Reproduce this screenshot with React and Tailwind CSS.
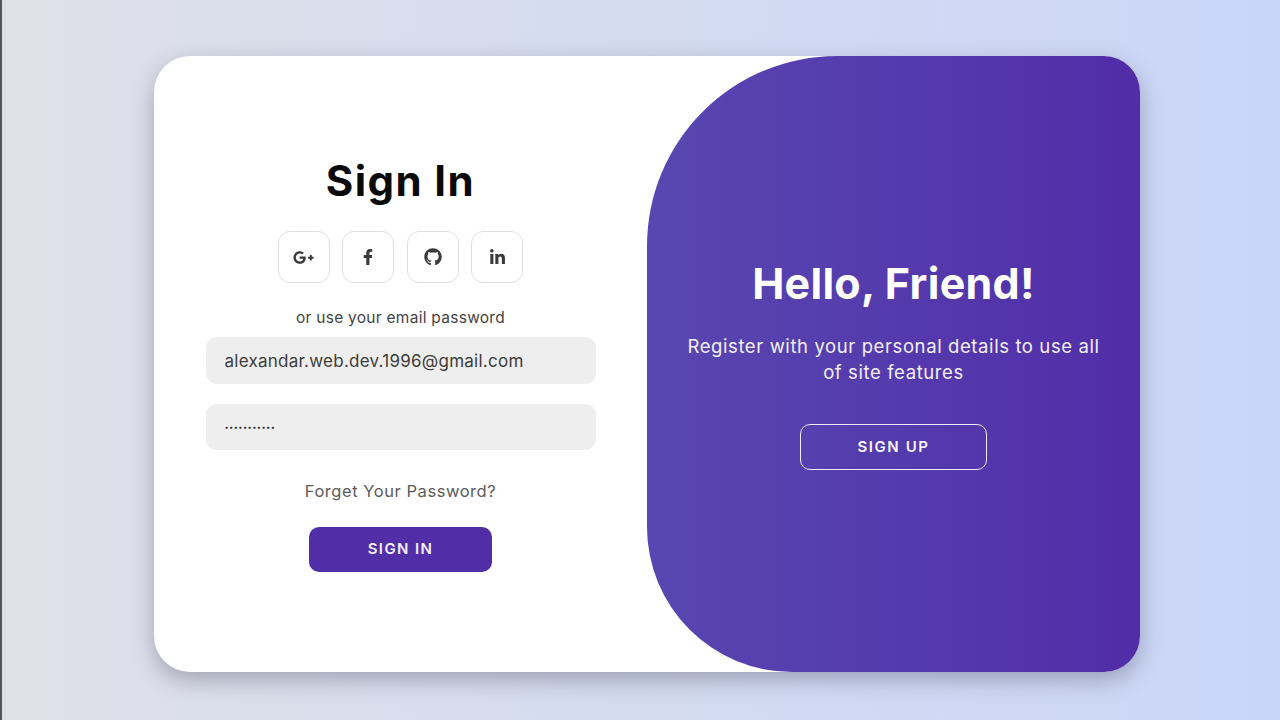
import React from "react";
import { FaGooglePlusG, FaFacebookF, FaGithub, FaLinkedinIn } from "react-icons/fa";

function Social({ children }) {
  return (
    <a className="flex h-[52px] w-[52px] items-center justify-center rounded-[12px] border border-[#dfdfdf] bg-white text-[#3a3a3a]">
      {children}
    </a>
  );
}

export default function App() {
  return (
    <div className="flex h-[720px] w-[1280px] items-start overflow-hidden border-l-2 border-[#55565c] bg-gradient-to-r from-[#dfe1e8] to-[#cad6f9] pt-[56px] pl-[152px] font-['Inter','Liberation_Sans',sans-serif]">
      <div className="flex h-[616px] w-[986px] shrink-0 rounded-[36px] bg-white shadow-[0_8px_22px_rgba(60,60,80,0.36)]">
        <form className="flex h-full w-[493px] flex-col items-center px-[52px] pt-[98px]">
          <h1 className="text-[42px] leading-[54px] font-bold tracking-[1.4px] text-[#0a0a0a]">Sign In</h1>
          <div className="mt-[23px] flex gap-[12.5px]">
            <Social><FaGooglePlusG className="h-[21px] w-[21px]" /></Social>
            <Social><FaFacebookF className="h-[16px] w-[16px]" /></Social>
            <Social><FaGithub className="h-[18px] w-[18px]" /></Social>
            <Social><FaLinkedinIn className="h-[17px] w-[17px]" /></Social>
          </div>
          <p className="mt-[25px] text-[15.5px] leading-[20px] tracking-[0.27px] text-[#444]">or use your email password</p>
          <input readOnly value="alexandar.web.dev.1996@gmail.com" className="mt-[9px] h-[47px] w-[390px] shrink-0 rounded-[11px] bg-[#eeeeee] px-[19px] text-[17px] tracking-[0.25px] text-[#3c3c3c] outline-none" />
          <input readOnly type="password" value="..........." className="mt-[20px] h-[46px] w-[390px] shrink-0 rounded-[11px] bg-[#eeeeee] px-[19px] text-[7.5px] tracking-[0.4px] text-[#333] outline-none" />
          <a className="mt-[30px] text-[16.5px] leading-[22px] tracking-[0.55px] text-[#5c5c5c]">Forget Your Password?</a>
          <button type="button" className="mt-[25px] h-[45px] w-[183px] rounded-[10px] bg-[#512da8] text-[15px] font-semibold tracking-[1.4px] text-[#f4f0fd]">SIGN IN</button>
        </form>
        <div className="flex h-full w-[493px] flex-col items-center rounded-[190px_36px_36px_145px] bg-gradient-to-r from-[#5847b1] to-[#512da8] px-[30px] pt-[202px] text-white">
          <h2 className="text-[43px] leading-[50px] font-bold tracking-[0.3px]">Hello, Friend!</h2>
          <p className="mt-[25px] w-[425px] text-center text-[18.5px] leading-[26px] tracking-[0.6px] text-[#f3f0fb]">Register with your personal details to use all of site features</p>
          <button type="button" className="mt-[39px] h-[46px] w-[187px] rounded-[10px] border border-[#eeeaf8] text-[15px] font-semibold tracking-[1.6px] text-[#f8f6fe]">SIGN UP</button>
        </div>
      </div>
    </div>
  );
}
